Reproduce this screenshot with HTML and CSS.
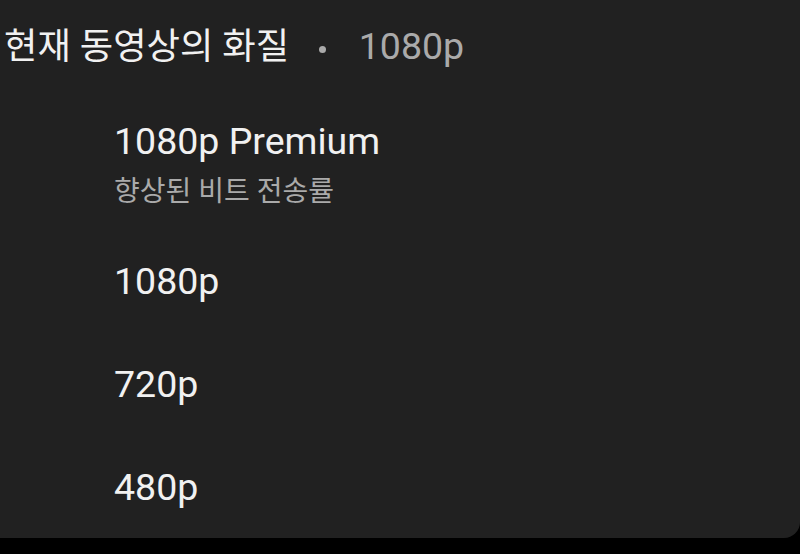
FILE: index.html
```html
<!DOCTYPE html>
<html lang="ko">
<head>
    <meta charset="UTF-8">
    <meta name="viewport" content="width=device-width, initial-scale=1.0">
    <title>화질</title>
    <link rel="stylesheet" href="styles.css">
</head>
<body>

    <div class="sheet">
        <!-- 현재 화질 -->
        <div class="sheet-header">
            <span class="title">현재 동영상의 화질</span>
            <span class="dot"></span>
            <span class="current">1080p</span>
        </div>

        <!-- 화질 목록 -->
        <div class="quality-list">
            <div class="option">
                <div class="label">1080p Premium</div>
                <div class="sub">향상된 비트 전송률</div>
            </div>
            <div class="option">
                <div class="label">1080p</div>
            </div>
            <div class="option">
                <div class="label">720p</div>
            </div>
            <div class="option">
                <div class="label">480p</div>
            </div>
        </div>
    </div>

</body>
</html>
```

FILE: styles.css
```css
body {
    margin: 0;
    padding: 0;
    background-color: #000;
    font-family: Roboto, "Noto Sans CJK KR", sans-serif;
    color: #f1f1f1;
}

.sheet {
    height: 538px;
    background-color: #212121;
    border-bottom-right-radius: 16px;
    padding-top: 26px;
    box-sizing: border-box;
    overflow: hidden;
}

.sheet-header {
    padding-left: 4px;
    font-size: 37.5px;
    line-height: 40px;
    white-space: nowrap;
}

.title {
    font-size: 36.3px;
}

.dot {
    display: inline-block;
    width: 7px;
    height: 7px;
    border-radius: 50%;
    background-color: #aaa;
    margin: 0 23px 0 21px;
    vertical-align: middle;
}

.current {
    color: #aaa;
}

.quality-list {
    display: flex;
    flex-direction: column;
    gap: 63px;
    margin-top: 54px;
}

.option {
    padding-left: 114px;
}

.label {
    font-size: 37.5px;
    line-height: 40px;
}

.sub {
    font-size: 28px;
    line-height: 33px;
    margin-top: 14px;
    color: #aaa;
}

.option:first-child {
    margin-bottom: -10px;
}
```
